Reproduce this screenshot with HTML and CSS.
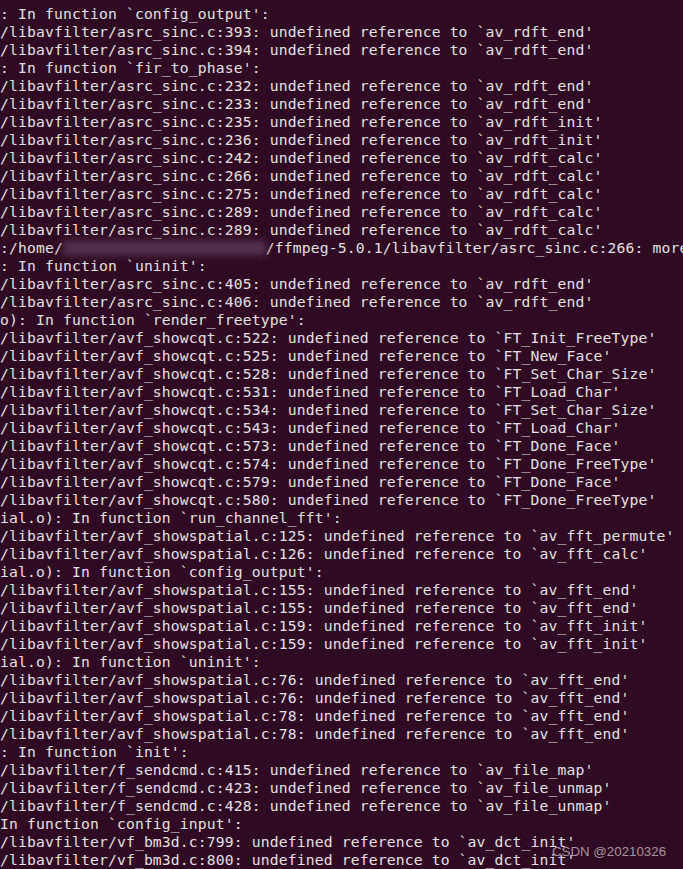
FILE: index.html
```html
<!DOCTYPE html>
<html>
<head>
<meta charset="utf-8">
<link rel="stylesheet" href="styles.css">
</head>
<body>
<div class="term">
<div class="ln">: In function `config_output':</div>
<div class="ln">/libavfilter/asrc_sinc.c:393: undefined reference to `av_rdft_end'</div>
<div class="ln">/libavfilter/asrc_sinc.c:394: undefined reference to `av_rdft_end'</div>
<div class="ln">: In function `fir_to_phase':</div>
<div class="ln">/libavfilter/asrc_sinc.c:232: undefined reference to `av_rdft_end'</div>
<div class="ln">/libavfilter/asrc_sinc.c:233: undefined reference to `av_rdft_end'</div>
<div class="ln">/libavfilter/asrc_sinc.c:235: undefined reference to `av_rdft_init'</div>
<div class="ln">/libavfilter/asrc_sinc.c:236: undefined reference to `av_rdft_init'</div>
<div class="ln">/libavfilter/asrc_sinc.c:242: undefined reference to `av_rdft_calc'</div>
<div class="ln">/libavfilter/asrc_sinc.c:266: undefined reference to `av_rdft_calc'</div>
<div class="ln">/libavfilter/asrc_sinc.c:275: undefined reference to `av_rdft_calc'</div>
<div class="ln">/libavfilter/asrc_sinc.c:289: undefined reference to `av_rdft_calc'</div>
<div class="ln">/libavfilter/asrc_sinc.c:289: undefined reference to `av_rdft_calc'</div>
<div class="ln">:/home/<span class="blur">                      </span>/ffmpeg-5.0.1/libavfilter/asrc_sinc.c:266: more</div>
<div class="ln">: In function `uninit':</div>
<div class="ln">/libavfilter/asrc_sinc.c:405: undefined reference to `av_rdft_end'</div>
<div class="ln">/libavfilter/asrc_sinc.c:406: undefined reference to `av_rdft_end'</div>
<div class="ln">o): In function `render_freetype':</div>
<div class="ln">/libavfilter/avf_showcqt.c:522: undefined reference to `FT_Init_FreeType'</div>
<div class="ln">/libavfilter/avf_showcqt.c:525: undefined reference to `FT_New_Face'</div>
<div class="ln">/libavfilter/avf_showcqt.c:528: undefined reference to `FT_Set_Char_Size'</div>
<div class="ln">/libavfilter/avf_showcqt.c:531: undefined reference to `FT_Load_Char'</div>
<div class="ln">/libavfilter/avf_showcqt.c:534: undefined reference to `FT_Set_Char_Size'</div>
<div class="ln">/libavfilter/avf_showcqt.c:543: undefined reference to `FT_Load_Char'</div>
<div class="ln">/libavfilter/avf_showcqt.c:573: undefined reference to `FT_Done_Face'</div>
<div class="ln">/libavfilter/avf_showcqt.c:574: undefined reference to `FT_Done_FreeType'</div>
<div class="ln">/libavfilter/avf_showcqt.c:579: undefined reference to `FT_Done_Face'</div>
<div class="ln">/libavfilter/avf_showcqt.c:580: undefined reference to `FT_Done_FreeType'</div>
<div class="ln">ial.o): In function `run_channel_fft':</div>
<div class="ln">/libavfilter/avf_showspatial.c:125: undefined reference to `av_fft_permute'</div>
<div class="ln">/libavfilter/avf_showspatial.c:126: undefined reference to `av_fft_calc'</div>
<div class="ln">ial.o): In function `config_output':</div>
<div class="ln">/libavfilter/avf_showspatial.c:155: undefined reference to `av_fft_end'</div>
<div class="ln">/libavfilter/avf_showspatial.c:155: undefined reference to `av_fft_end'</div>
<div class="ln">/libavfilter/avf_showspatial.c:159: undefined reference to `av_fft_init'</div>
<div class="ln">/libavfilter/avf_showspatial.c:159: undefined reference to `av_fft_init'</div>
<div class="ln">ial.o): In function `uninit':</div>
<div class="ln">/libavfilter/avf_showspatial.c:76: undefined reference to `av_fft_end'</div>
<div class="ln">/libavfilter/avf_showspatial.c:76: undefined reference to `av_fft_end'</div>
<div class="ln">/libavfilter/avf_showspatial.c:78: undefined reference to `av_fft_end'</div>
<div class="ln">/libavfilter/avf_showspatial.c:78: undefined reference to `av_fft_end'</div>
<div class="ln">: In function `init':</div>
<div class="ln">/libavfilter/f_sendcmd.c:415: undefined reference to `av_file_map'</div>
<div class="ln">/libavfilter/f_sendcmd.c:423: undefined reference to `av_file_unmap'</div>
<div class="ln">/libavfilter/f_sendcmd.c:428: undefined reference to `av_file_unmap'</div>
<div class="ln">In function `config_input':</div>
<div class="ln">/libavfilter/vf_bm3d.c:799: undefined reference to `av_dct_init'</div>
<div class="ln">/libavfilter/vf_bm3d.c:800: undefined reference to `av_dct_init'</div>
</div>
<div class="wm">CSDN @20210326</div>
</body>
</html>
```
FILE: styles.css
```css
html, body {
  margin: 0;
  padding: 0;
  background: #300a24;
  height: 100%;
  overflow: hidden;
}
.term {
  padding-top: 5px;
  font-family: "DejaVu Sans Mono", monospace;
  font-size: 14.7px;
  letter-spacing: 0.15px;
  line-height: 18px;
  color: #e4e0e2;
  overflow: hidden;
}
.ln {
  white-space: pre;
  height: 18px;
}
.blur {
  display: inline-block;
  height: 14px;
  vertical-align: -2px;
  padding-right: 5px;
  background: #543650;
  filter: blur(4px);
}
.wm {
  position: absolute;
  left: 552px;
  top: 844px;
  font-family: "Liberation Sans", Arial, sans-serif;
  font-size: 13.3px;
  letter-spacing: 0;
  color: rgba(205, 195, 202, 0.75);
}
```
